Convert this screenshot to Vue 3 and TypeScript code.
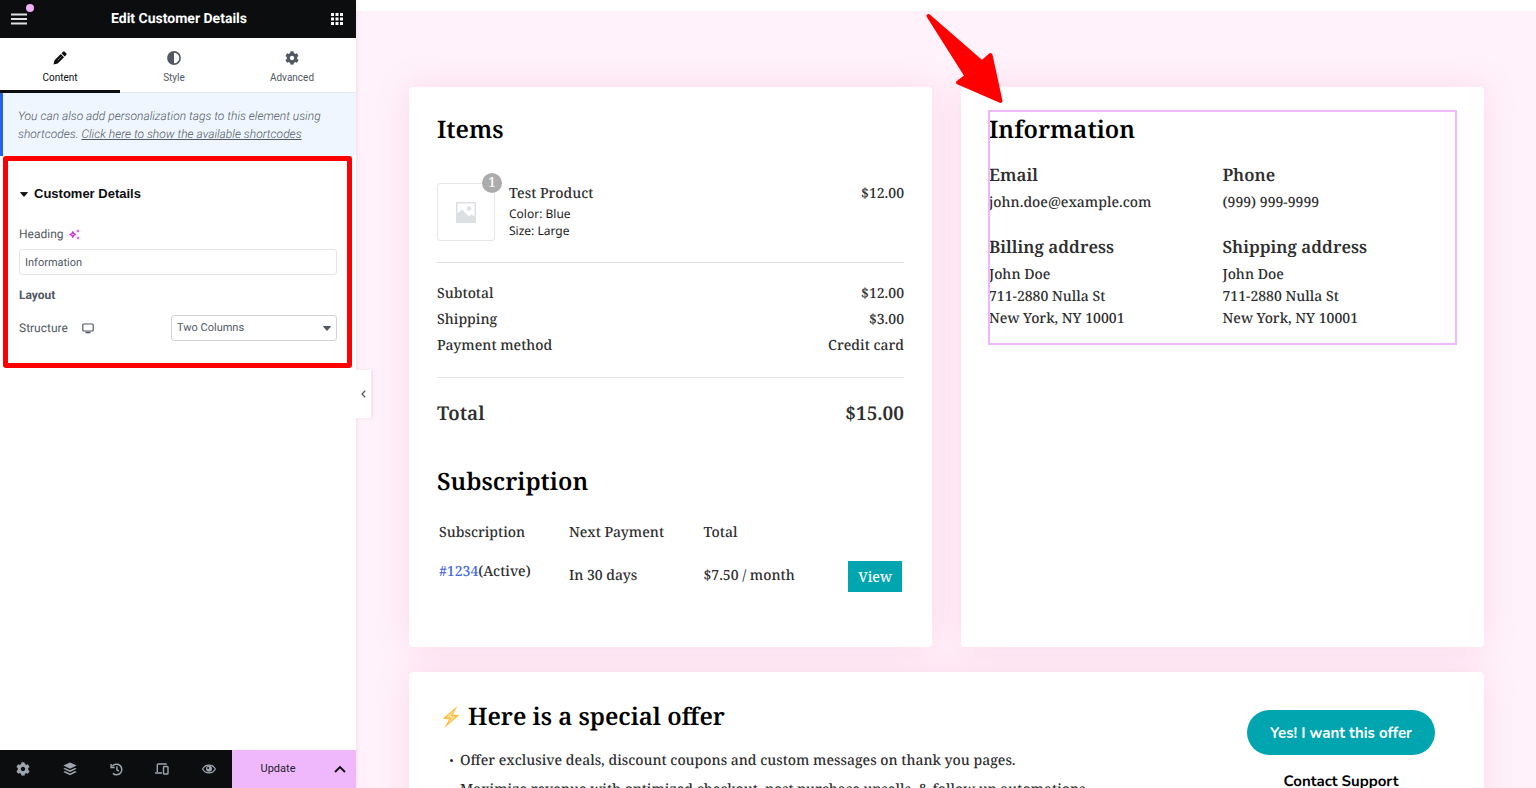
<script setup lang="ts">
import { ref } from 'vue'

interface Row { label: string; value: string }
interface Detail { title: string; lines: string[] }

const heading = ref('Information')
const structure = ref('Two Columns')

const totals: Row[] = [
  { label: 'Subtotal', value: '$12.00' },
  { label: 'Shipping', value: '$3.00' },
  { label: 'Payment method', value: 'Credit card' },
]

const address: string[] = ['John Doe', '711-2880 Nulla St', 'New York, NY 10001']

const details: Detail[] = [
  { title: 'Email', lines: ['john.doe@example.com'] },
  { title: 'Phone', lines: ['(999) 999-9999'] },
  { title: 'Billing address', lines: address },
  { title: 'Shipping address', lines: address },
]

const perks: string[] = [
  'Offer exclusive deals, discount coupons and custom messages on thank you pages.',
  'Maximize revenue with optimized checkout, post purchase upsells, & follow up automations.',
]

const gearPath =
  'M487.4 315.7l-42.6-24.6c4.3-23.2 4.3-47 0-70.2l42.6-24.6c4.9-2.8 7.1-8.6 5.5-14-11.1-35.6-30-67.8-54.7-94.6-3.8-4.1-10-5.1-14.8-2.3L380.8 110c-17.9-15.4-38.5-27.3-60.8-35.1V25.800c0-5.600-3.900-10.500-9.400-11.700-36.700-8.200-74.300-7.800-109.200 0-5.500 1.200-9.400 6.100-9.400 11.700V75c-22.200 7.900-42.800 19.800-60.800 35.100L88.700 85.500c-4.900-2.800-11-1.900-14.800 2.300-24.700 26.700-43.600 58.900-54.700 94.600-1.700 5.400.6 11.200 5.500 14L67.300 221c-4.300 23.200-4.300 47 0 70.200l-42.600 24.600c-4.900 2.800-7.100 8.600-5.500 14 11.100 35.600 30 67.800 54.700 94.600 3.800 4.100 10 5.100 14.800 2.300l42.600-24.600c17.900 15.400 38.500 27.300 60.800 35.100v49.200c0 5.600 3.900 10.500 9.400 11.700 36.700 8.200 74.300 7.800 109.200 0 5.500-1.200 9.400-6.100 9.400-11.700v-49.200c22.200-7.900 42.800-19.800 60.800-35.100l42.600 24.600c4.900 2.800 11 1.900 14.800-2.300 24.700-26.700 43.600-58.900 54.700-94.600 1.500-5.500-.7-11.300-5.600-14.100zM256 336c-44.100 0-80-35.900-80-80s35.900-80 80-80 80 35.900 80 80-35.900 80-80 80z'
</script>

<template>
  <div class="app">
    <aside class="panel">
      <header class="panel-header">
        <button class="icon-button menu" aria-label="Menu">
          <svg width="16" height="12" viewBox="0 0 16 12"><path d="M0 1.500h16M0 6h16M0 10.500h16" stroke="#dfe1e4" stroke-width="2" /></svg>
          <span class="dot"></span>
        </button>
        <h1>Edit Customer Details</h1>
        <button class="icon-button" aria-label="Widgets">
          <svg width="12" height="12" viewBox="0 0 12 12" fill="#fff">
            <path d="M0 0h3v3H0zM4.500 0h3v3h-3zM9 0h3v3H9zM0 4.500h3v3H0zM4.500 4.500h3v3h-3zM9 4.500h3v3H9zM0 9h3v3H0zM4.500 9h3v3h-3zM9 9h3v3H9z" />
          </svg>
        </button>
      </header>

      <nav class="tabs">
        <button class="tab active">
          <svg width="14" height="14" viewBox="0 0 14 14" fill="currentColor">
            <path d="M0.500 13.500l1-4.200 6.300-6.300 3.200 3.200-6.300 6.300zM8.500 2.300l1.500-1.500c.5-.5 1.200-.5 1.700 0l1.500 1.500c.5.5.5 1.200 0 1.700l-1.500 1.500z" />
            <path d="M4.500 9.500l4-4" stroke="#fff" stroke-width=".4" />
          </svg>
          Content
        </button>
        <button class="tab">
          <svg width="14" height="14" viewBox="0 0 14 14">
            <circle cx="7" cy="7" r="6.100" fill="none" stroke="currentColor" stroke-width="1.600" />
            <path d="M7 1a6 6 0 0 0 0 12z" fill="currentColor" />
          </svg>
          Style
        </button>
        <button class="tab">
          <svg width="14" height="14" viewBox="0 0 512 512"><path :d="gearPath" fill="currentColor" /></svg>
          Advanced
        </button>
      </nav>

      <p class="notice">
        You can also add personalization tags to this element using shortcodes.
        <a href="#">Click here to show the available shortcodes</a>
      </p>

      <section class="controls">
        <button class="section-toggle">
          <svg width="8" height="5" viewBox="0 0 8 5"><path d="M.5.5h7L4 4.500z" fill="#0c0d0e" stroke="#0c0d0e" stroke-linejoin="round" stroke-width=".8" /></svg>
          Customer Details
        </button>
        <div class="label-row">
          <label for="heading">Heading</label>
          <svg width="11" height="11" viewBox="0 0 11 11" fill="none" stroke="#d62be0">
            <path d="M3.800 2.700l.9 1.900 1.900.9-1.900.9-.9 1.900-.9-1.900L1 5.500l1.900-.9z" stroke-width="1.300" stroke-linejoin="round" />
            <path d="M9 .2l.6 1.200 1.200.6-1.200.6L9 3.800l-.6-1.200L7.200 2l1.200-.6zM9 7.200l.6 1.200 1.200.6-1.200.6-.6 1.200-.6-1.200L7.200 9l1.200-.6z" fill="#d62be0" stroke="none" />
          </svg>
        </div>
        <input id="heading" v-model="heading" type="text" />
        <h2>Layout</h2>
        <div class="structure">
          <label for="structure">Structure</label>
          <svg width="12" height="11" viewBox="0 0 12 11" fill="none" stroke="#515962">
            <rect x=".8" y="1" width="10.400" height="7" rx="1" stroke-width="1.200" />
            <path d="M3.500 9.500h5" stroke-width="1.600" />
          </svg>
          <div class="select-wrap">
            <select id="structure" v-model="structure">
              <option>Two Columns</option>
              <option>One Column</option>
            </select>
            <svg class="caret" width="8" height="5" viewBox="0 0 8 5"><path d="M.5.5h7L4 4.500z" fill="#515962" stroke="#515962" stroke-linejoin="round" /></svg>
          </div>
        </div>
      </section>

      <footer class="panel-footer">
        <button class="tool" aria-label="Settings">
          <svg width="14" height="14" viewBox="0 0 512 512"><path :d="gearPath" fill="currentColor" /></svg>
        </button>
        <button class="tool" aria-label="Structure">
          <svg width="14" height="14" viewBox="0 0 14 14" fill="currentColor">
            <path d="M7 .5l6.700 3.100L7 6.700.3 3.600z" />
            <path d="M2 5.900l5 2.300 5-2.300 1.700.9L7 9.900.3 6.800z" />
            <path d="M2 9.100l5 2.300 5-2.300 1.700.9L7 13.200.3 10z" />
          </svg>
        </button>
        <button class="tool" aria-label="History">
          <svg width="13" height="13" viewBox="0 0 13 13" fill="none" stroke="currentColor" stroke-width="1.500">
            <path d="M2.300 3.300a5.300 5.300 0 1 1 .6 7.100" />
            <path d="M1.100 1v3.600h3.600M6.900 3.500v3.300l2 1.400" />
          </svg>
        </button>
        <button class="tool" aria-label="Responsive mode">
          <svg width="14" height="12" viewBox="0 0 14 12" fill="none" stroke="currentColor" stroke-width="1.400">
            <path d="M2.300 9V1.800a.8.8 0 0 1 .8-.8h8.700M0 10h7" />
            <rect x="8.500" y="3.500" width="4.500" height="7.500" rx=".8" />
          </svg>
        </button>
        <button class="tool" aria-label="Preview">
          <svg width="14" height="10" viewBox="0 0 14 10">
            <path d="M.6 5C3.300-.2 10.700-.2 13.400 5 10.700 10.200 3.300 10.200.6 5z" fill="none" stroke="currentColor" stroke-width="1.200" />
            <circle cx="7" cy="4.700" r="3" fill="currentColor" />
            <circle cx="6.200" cy="3.900" r="1" fill="#0c0d0e" />
          </svg>
        </button>
        <button class="update">Update</button>
        <button class="update-more" aria-label="Save options">
          <svg width="12" height="8" viewBox="0 0 12 8"><path d="M1 7l5-5 5 5" fill="none" stroke="#0c0d0e" stroke-width="1.800" /></svg>
        </button>
      </footer>

      <button class="collapse" aria-label="Collapse panel">
        <svg width="5" height="8" viewBox="0 0 5 8"><path d="M4.200.8L1 4l3.200 3.200" fill="none" stroke="#515962" stroke-width="1.300" /></svg>
      </button>
    </aside>

    <main class="canvas">
      <div class="columns">
        <section class="card">
          <h2 class="title">Items</h2>
          <div class="product">
            <div class="thumb">
              <svg width="20" height="21" viewBox="0 0 20 21">
                <path d="M0 0h20v21H0z" fill="#dcdfe3" />
                <path d="M1.500 1.500h17v13.300l-3-2.300-3 1.800L6 7.500l-4.500 4z" fill="#fff" />
                <circle cx="13" cy="6.500" r="2.200" fill="#dcdfe3" />
              </svg>
              <span class="badge">1</span>
            </div>
            <div class="product-text">
              <div class="name">Test Product</div>
              <div class="meta">Color: Blue</div>
              <div class="meta">Size: Large</div>
            </div>
            <div class="price">$12.00</div>
          </div>
          <dl class="totals">
            <div v-for="row in totals" :key="row.label" class="row">
              <dt>{{ row.label }}</dt>
              <dd>{{ row.value }}</dd>
            </div>
          </dl>
          <div class="row grand"><span>Total</span><span>$15.00</span></div>

          <h2 class="title">Subscription</h2>
          <table>
            <thead>
              <tr><th class="c1">Subscription</th><th class="c2">Next Payment</th><th class="c3">Total</th><th></th></tr>
            </thead>
            <tbody>
              <tr>
                <td class="id"><a href="#">#1234</a>(Active)</td>
                <td>In 30 days</td>
                <td>$7.50 / month</td>
                <td class="action"><button class="view">View</button></td>
              </tr>
            </tbody>
          </table>
        </section>

        <section class="card">
          <div class="selected">
            <h2 class="title">Information</h2>
            <div class="details">
              <div v-for="d in details" :key="d.title">
                <h3>{{ d.title }}</h3>
                <p v-for="line in d.lines" :key="line">{{ line }}</p>
              </div>
            </div>
          </div>
          <svg class="arrow" width="84" height="96" viewBox="0 0 84 96">
            <path d="M7.500 7l53.500 46.500 8.500-7.500 10 46L37 73.500l8.500-6.500z" fill="#fe0000" stroke="#fe0000" stroke-width="4" stroke-linejoin="round" />
          </svg>
        </section>
      </div>

      <section class="card offer">
        <div class="pitch">
          <h2 class="title offer-title">
            <svg width="20" height="24" viewBox="0 0 20 24">
              <path d="M16.500 1L1.500 13.800l6.500.4L3.500 23 18.500 10l-6.700-.3z" fill="#fbbf3f" />
              <path d="M13.500 5L5.500 12.300l5.300.4-3.500 6 7.200-7.200-5-.5z" fill="#fde1a0" />
            </svg>
            Here is a special offer
          </h2>
          <ul>
            <li v-for="perk in perks" :key="perk">{{ perk }}</li>
          </ul>
        </div>
        <div class="cta">
          <button class="accept">Yes! I want this offer</button>
          <a href="#">Contact Support</a>
        </div>
      </section>
    </main>
  </div>
</template>

<style>
body { margin: 0; overflow: hidden; }
</style>

<style scoped>
* { box-sizing: border-box; }
h1, h2, h3, p, dl, dd, ul { margin: 0; padding: 0; }
button { border: 0; padding: 0; background: none; font: inherit; color: inherit; cursor: pointer; }
svg { display: block; flex: none; }

.app {
  display: flex;
  height: 100vh;
  background: #fff;
  text-rendering: geometricPrecision;
}

/* Editor panel */
.panel {
  position: relative;
  z-index: 2;
  display: flex;
  flex: none;
  flex-direction: column;
  width: 356px;
  background: #fff;
  color: #515962;
  font: 12px/18px Roboto, "Liberation Sans", sans-serif;
  box-shadow: 0 0 5px rgba(120, 60, 90, 0.15);
}
.panel-header {
  display: flex;
  align-items: center;
  justify-content: space-between;
  height: 38px;
  padding: 0 13px 0 11px;
  background: #0c0d0e;
}
.panel-header h1 { color: #fff; font-size: 14px; font-weight: 700; }
.icon-button { position: relative; }
.dot {
  position: absolute;
  top: -9px;
  right: -7px;
  width: 8px;
  height: 8px;
  border-radius: 50%;
  background: #f0b0fc;
}
.tabs { display: grid; grid-template-columns: 120fr 108fr 128fr; height: 55px; }
.tab {
  display: flex;
  flex-direction: column;
  align-items: center;
  gap: 4px;
  padding-top: 13px;
  border-bottom: 1px solid #e6e9ec;
  font-size: 10px;
}
.tab.active { border-bottom: 3px solid #0c0d0e; color: #0c0d0e; }
.notice {
  padding: 14px 24px 13px 15px;
  border-left: 3px solid #2563eb;
  background: #eff6ff;
  color: #515962;
  font-style: italic;
  font-weight: 300;
}
.notice a { color: inherit; }
.controls {
  margin: 0 4px 0 3px;
  padding: 22px 10px 22px 11px;
  border: 5px solid #fe0000;
  border-radius: 3px;
}
.section-toggle {
  display: flex;
  align-items: center;
  gap: 6px;
  padding: 2px 1px;
  color: #0c0d0e;
  font-family: "Liberation Sans", Roboto, sans-serif;
  font-size: 13px;
  font-weight: 700;
}
.label-row { display: flex; align-items: center; gap: 5px; margin-top: 20px; }
input, select {
  display: block;
  width: 100%;
  height: 26px;
  padding: 0 5px;
  border: 1px solid #e3e5e8;
  border-radius: 3px;
  background: #fff;
  color: #515962;
  font: inherit;
  font-size: 11px;
  text-rendering: inherit;
}
input { margin-top: 6px; }
.controls h2 { margin-top: 11px; font-size: 12px; font-weight: 700; }
.structure { display: flex; align-items: center; gap: 14px; margin-top: 11px; }
.select-wrap { position: relative; width: 166px; margin-left: auto; }
select { appearance: none; border-color: #d0d4d9; }
.caret { position: absolute; top: 11px; right: 6px; pointer-events: none; }
.panel-footer {
  display: flex;
  height: 38px;
  margin-top: auto;
  background: #0c0d0e;
  color: #9da5ae;
}
.tool { display: flex; flex: 1; align-items: center; justify-content: center; }
.update { width: 92px; background: #f0b8fc; color: #26222a; font-size: 11px; }
.update-more {
  display: flex;
  align-items: center;
  justify-content: center;
  width: 32px;
  background: #f0b8fc;
}
.collapse {
  position: absolute;
  top: 370px;
  left: 100%;
  display: flex;
  align-items: center;
  justify-content: center;
  width: 15px;
  height: 48px;
  background: #fff;
  box-shadow: 2px 0 3px rgba(120, 60, 90, 0.1);
}

/* Page preview */
.canvas {
  isolation: isolate;
  flex: 1;
  min-width: 0;
  padding: 76px 52px 0 53px;
  border-top: 11px solid #fff;
  overflow: hidden;
  background: #fff2fa;
  color: #2e2e2e;
  font: 500 14px/22px "Noto Serif", "Droid Serif", "DejaVu Serif Condensed", "Liberation Serif", serif;
}
.columns { display: grid; grid-template-columns: 1fr 1fr; gap: 29px; }
.card {
  position: relative;
  padding: 24px 28px;
  border-radius: 4px;
  background: #fff;
}
.card::before {
  position: absolute;
  z-index: -1;
  inset: 0;
  border-radius: 4px;
  box-shadow: 0 0 32px rgba(238, 140, 185, 0.24);
  content: "";
}
.title { color: #000; font-size: 24px; font-weight: 600; line-height: 38px; }
.product {
  display: flex;
  gap: 14px;
  margin-top: 34px;
  padding-bottom: 21px;
  border-bottom: 1px solid #dfdfdf;
}
.thumb {
  position: relative;
  display: flex;
  align-items: center;
  justify-content: center;
  width: 58px;
  height: 58px;
  border: 1px solid #e6e6e6;
  border-radius: 3px;
}
.badge {
  position: absolute;
  top: -11px;
  right: -8px;
  width: 20px;
  height: 20px;
  border-radius: 50%;
  background: #acacac;
  color: #fff;
  line-height: 20px;
  text-align: center;
}
.meta { color: #1c1c1c; font: 12px/17px "Noto Sans", "Open Sans", sans-serif; }
.price { margin-left: auto; }
.totals { padding: 18px 0; border-bottom: 1px solid #e4e4e4; }
.row { display: flex; justify-content: space-between; line-height: 26px; }
.grand { margin: 22px 0 37px; font-size: 19px; font-weight: 600; }
table {
  width: 100%;
  margin-top: 19px;
  margin-bottom: 15px;
  border-spacing: 2px;
  table-layout: fixed;
}
th, td { padding: 0; text-align: left; font-weight: 500; }
th { height: 22px; }
td { height: 60px; }
.c1 { width: 28%; }
.c2 { width: 29%; }
.c3 { width: 29%; }
.id { padding-bottom: 9px; }
.id a { color: #4169e1; text-decoration: none; }
.action { text-align: right; }
.view { padding: 0 10px; background: #00a5b0; color: #fff; line-height: 31px; }
.selected { padding-bottom: 14px; outline: 2px solid #f0b8fc; outline-offset: -1px; }
.details { display: grid; grid-template-columns: 1fr 1fr; row-gap: 20px; padding-top: 13px; }
.details h3 { margin-bottom: 4px; font-size: 17px; font-weight: 600; line-height: 26px; }
.arrow { position: absolute; top: -78px; left: -40px; }
.offer { display: flex; justify-content: space-between; margin-top: 25px; padding: 26px 49px 24px 32px; }
.offer-title { display: flex; align-items: center; gap: 7px; }
.pitch ul { margin-top: 10px; list-style: none; }
.pitch li { position: relative; padding-left: 19px; line-height: 29px; }
.pitch li::before {
  position: absolute;
  top: 13px;
  left: 9px;
  width: 3px;
  height: 3px;
  border-radius: 50%;
  background: #2e2e2e;
  content: "";
}
.cta {
  display: flex;
  flex: none;
  flex-direction: column;
  align-items: center;
  gap: 16px;
  padding-top: 12px;
  color: #000;
  font: 700 15px/22px Nunito, Lato, sans-serif;
}
.cta a { color: inherit; text-decoration: none; }
.accept { width: 188px; height: 45px; border-radius: 23px; background: #00a5b0; color: #fff; }
</style>
